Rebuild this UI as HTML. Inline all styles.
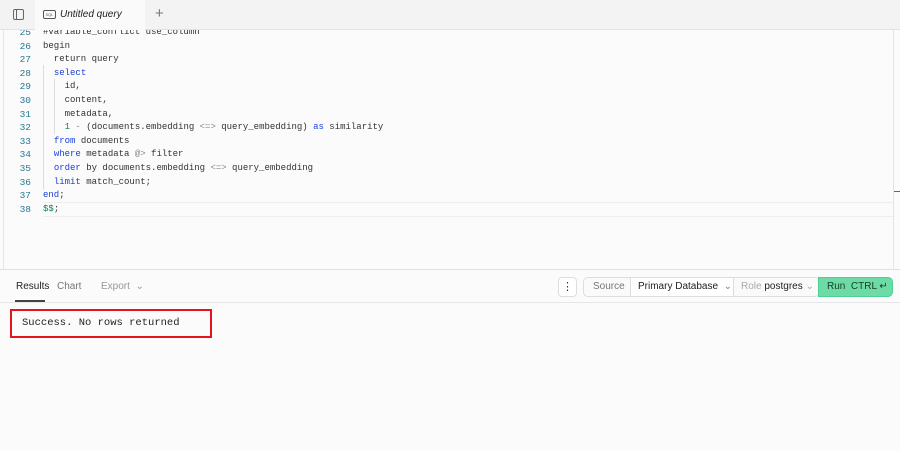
<!DOCTYPE html>
<html><head><style>
body{margin:0;width:900px;height:451px;background:#fbfbfb;font-family:"Liberation Sans",sans-serif;position:relative;overflow:hidden}
.abs{position:absolute}
.code{font-family:"Liberation Mono",monospace;font-size:9px;color:#333;white-space:pre}
.ln{position:absolute;left:0;width:31px;text-align:right;color:#237893;font-family:"Liberation Mono",monospace;font-size:9.5px}
.k{color:#1a3fd8}.g{color:#098658}.o{color:#888}
</style></head><body>
<div class="abs" style="left:0;top:26px;width:900px">
<div style="position:relative;height:177px;line-height:13.6px">
<div class="ln" style="top:0">25</div><div class="ln" style="top:13.6px">26</div><div class="ln" style="top:27.2px">27</div><div class="ln" style="top:40.8px">28</div><div class="ln" style="top:54.4px">29</div><div class="ln" style="top:68px">30</div><div class="ln" style="top:81.6px">31</div><div class="ln" style="top:95.2px">32</div><div class="ln" style="top:108.8px">33</div><div class="ln" style="top:122.4px">34</div><div class="ln" style="top:136px">35</div><div class="ln" style="top:149.6px">36</div><div class="ln" style="top:163.2px">37</div><div class="ln" style="top:176.8px">38</div>
<div class="code abs" style="left:43px;top:0">#variable_conflict use_column
begin
  return query
  <span class="k">select</span>
    id,
    content,
    metadata,
    <span class="g">1</span> <span class="o">-</span> (documents.embedding <span class="o">&lt;=&gt;</span> query_embedding) <span class="k">as</span> similarity
  <span class="k">from</span> documents
  <span class="k">where</span> metadata <span class="o">@&gt;</span> filter
  <span class="k">order</span> by documents.embedding <span class="o">&lt;=&gt;</span> query_embedding
  <span class="k">limit</span> match_count;
<span class="k">end</span>;
<span class="g">$$</span>;</div>
</div></div>
<div class="abs" style="left:0;top:0;width:900px;height:29px;background:#f3f3f3;border-bottom:1px solid #e2e2e2"></div>
<div class="abs" style="left:13px;top:9px;width:9px;height:9px;border:1px solid #666;border-radius:2px"></div>
<div class="abs" style="left:16px;top:9px;width:1px;height:11px;background:#666"></div>
<div class="abs" style="left:35px;top:0;width:110px;height:30px;background:#fafafa"></div>
<div class="abs" style="left:43px;top:10px;width:11px;height:7px;border:1px solid #555;border-radius:2px;font-size:4px;line-height:7px;text-align:center;color:#555">SQL</div>
<div class="abs" style="left:60px;top:9px;font-size:10px;font-style:italic;color:#222">Untitled query</div>
<div class="abs" style="left:155px;top:5px;font-size:15px;color:#777">+</div>
<div class="abs" style="left:3px;top:30px;width:1px;height:240px;background:#e6e6e6"></div>
<div class="abs" style="left:893px;top:30px;width:1px;height:240px;background:#e6e6e6"></div>
<div class="abs" style="left:894px;top:191px;width:6px;height:1px;background:#666"></div>
<div class="abs" style="left:43px;top:202px;width:850px;height:13px;border-top:1px solid #eee;border-bottom:1px solid #eee"></div>
<div class="abs" style="left:43px;top:65px;width:1px;height:125px;background:#ddd"></div>
<div class="abs" style="left:54px;top:79px;width:1px;height:55px;background:#ddd"></div>
<div class="abs" style="left:0;top:269px;width:900px;height:1px;background:#e0e0e0"></div>
<div class="abs" style="left:0;top:302px;width:900px;height:1px;background:#e6e6e6"></div>
<div class="abs" style="left:16px;top:281px;font-size:10px;color:#222">Results</div>
<div class="abs" style="left:15px;top:300px;width:30px;height:2px;background:#444"></div>
<div class="abs" style="left:57px;top:281px;font-size:10px;color:#777">Chart</div>
<div class="abs" style="left:101px;top:281px;font-size:10px;color:#999">Export &nbsp;⌄</div>
<div class="abs" style="left:558px;top:277px;width:17px;height:18px;border:1px solid #ddd;border-radius:4px;background:#fff;text-align:center;font-size:11px;line-height:18px;color:#333">⋮</div>
<div class="abs" style="left:583px;top:277px;width:235px;height:18px;border:1px solid #ddd;border-radius:5px;background:#fafafa;font-size:10px;line-height:18px">
<span class="abs" style="left:9px;color:#777">Source</span>
<span class="abs" style="left:46px;top:0;width:1px;height:18px;background:#ddd"></span>
<span class="abs" style="left:47px;width:102px;height:18px;background:#fff"></span>
<span class="abs" style="left:54px;color:#222">Primary Database &nbsp;<span style="color:#888">⌄</span></span>
<span class="abs" style="left:149px;top:0;width:1px;height:18px;background:#ddd"></span>
<span class="abs" style="left:157px;color:#aaa">Role <span style="color:#222">postgres</span> ⌄</span>
</div>
<div class="abs" style="left:818px;top:277px;width:73px;height:18px;border:1px solid #4fcf93;border-radius:0 5px 5px 0;background:#6ddba5;font-size:10px;line-height:18px;color:#1a3a2a"><span style="margin-left:8px">Run &nbsp;CTRL ↵</span></div>
<div class="abs" style="left:10px;top:309px;width:198px;height:25px;border:2px solid #e4141b"></div>
<div class="abs code" style="left:22px;top:317px;font-size:10.5px;color:#222">Success. No rows returned</div>
</body></html>
